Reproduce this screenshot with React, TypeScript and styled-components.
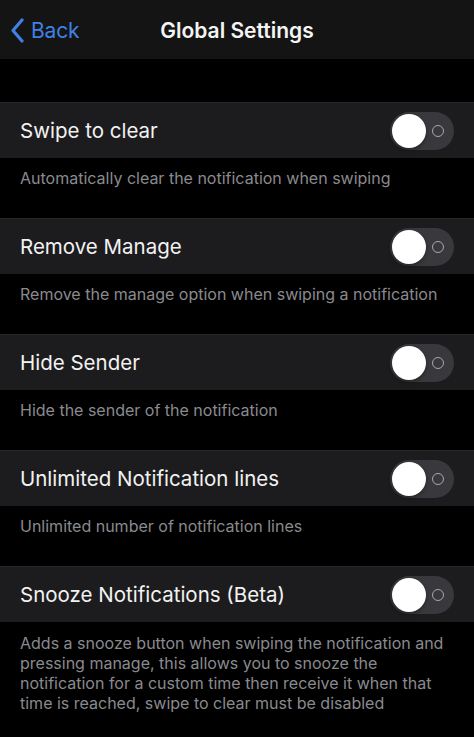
import React, { useState } from 'react'
import styled, { createGlobalStyle } from 'styled-components'

const GlobalStyle = createGlobalStyle`
  html, body {
    margin: 0;
    padding: 0;
    background: #000;
  }
  body {
    font-family: Inter, "Noto Sans", sans-serif;
    -webkit-font-smoothing: antialiased;
  }
`

const Page = styled.div`
  width: 474px;
  min-height: 737px;
  background: #000;
  display: flex;
  flex-direction: column;
`

const NavBar = styled.header`
  height: 59px;
  background: #141414;
  display: grid;
  grid-template-columns: 1fr auto 1fr;
  align-items: center;
  padding: 2px 10px 0;
  box-sizing: border-box;
`

const BackButton = styled.button`
  display: flex;
  align-items: center;
  gap: 7px;
  background: none;
  border: 0;
  padding: 0;
  color: #3f82e4;
  font-family: inherit;
  font-size: 21px;
  letter-spacing: -0.2px;
  cursor: pointer;
  justify-self: start;
`

const Title = styled.h1`
  margin: 0;
  color: #f4f4f4;
  font-size: 21px;
  font-weight: 600;
  letter-spacing: 0;
`

const List = styled.div`
  padding-top: 43px;
  display: flex;
  flex-direction: column;
`

const Section = styled.section`
  display: flex;
  flex-direction: column;
`

const Row = styled.div`
  height: 56px;
  background: #1c1c1e;
  border-top: 1px solid #262628;
  box-sizing: border-box;
  display: flex;
  align-items: center;
  justify-content: space-between;
  padding: 0 20px;
`

const Label = styled.span`
  color: #f2f2f2;
  font-size: 20.5px;
`

const Footer = styled.p<{ $last?: boolean }>`
  margin: 0;
  padding: ${p => (p.$last ? '11px 20px 20px' : '10px 20px 30px')};
  color: #8a8a8e;
  font-size: 16px;
  line-height: 20px;
`

const Track = styled.button<{ $on: boolean }>`
  position: relative;
  width: 64px;
  height: 38px;
  border-radius: 19px;
  border: 0;
  padding: 0;
  background: ${p => (p.$on ? '#34c759' : '#39393d')};
  cursor: pointer;
  flex-shrink: 0;
`

const Knob = styled.span<{ $on: boolean }>`
  position: absolute;
  top: 2px;
  left: ${p => (p.$on ? '28px' : '2px')};
  width: 34px;
  height: 34px;
  border-radius: 50%;
  background: #fff;
  box-shadow: 0 2px 4px rgba(0, 0, 0, 0.35);
  transition: left 0.2s;
`

const OffMark = styled.span`
  position: absolute;
  top: 50%;
  right: 10px;
  width: 10px;
  height: 10px;
  margin-top: -6px;
  border-radius: 50%;
  border: 1.5px solid #a8a8ac;
`

const Toggle: React.FC = () => {
  const [on, setOn] = useState(false)
  return (
    <Track $on={on} onClick={() => setOn(!on)}>
      {!on && <OffMark />}
      <Knob $on={on} />
    </Track>
  )
}

const settings = [
  {
    label: 'Swipe to clear',
    hint: 'Automatically clear the notification when swiping',
  },
  {
    label: 'Remove Manage',
    hint: 'Remove the manage option when swiping a notification',
  },
  { label: 'Hide Sender', hint: 'Hide the sender of the notification' },
  {
    label: 'Unlimited Notification lines',
    hint: 'Unlimited number of notification lines',
  },
  {
    label: 'Snooze Notifications (Beta)',
    hint:
      'Adds a snooze button when swiping the notification and pressing manage, this allows you to snooze the notification for a custom time then receive it when that time is reached, swipe to clear must be disabled',
  },
]

const App: React.FC = () => (
  <Page>
    <GlobalStyle />
    <NavBar>
      <BackButton>
        <svg width="14" height="25" viewBox="0 0 14 25">
          <path
            d="M12 2 L3 12.5 L12 23"
            fill="none"
            stroke="#3f82e4"
            strokeWidth="3.2"
            strokeLinecap="round"
            strokeLinejoin="round"
          />
        </svg>
        Back
      </BackButton>
      <Title>Global Settings</Title>
      <span />
    </NavBar>
    <List>
      {settings.map((s, i) => (
        <Section key={s.label}>
          <Row>
            <Label>{s.label}</Label>
            <Toggle />
          </Row>
          <Footer $last={i === settings.length - 1}>{s.hint}</Footer>
        </Section>
      ))}
    </List>
  </Page>
)

export default App
